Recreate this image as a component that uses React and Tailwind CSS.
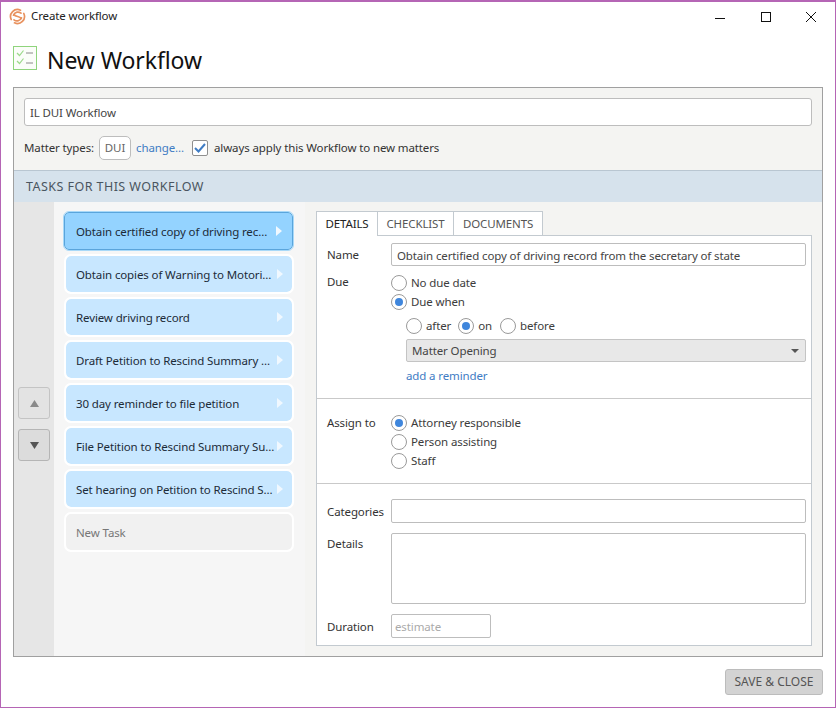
import React from 'react';

const tasks = [
  'Obtain certified copy of driving record from the secretary of state',
  'Obtain copies of Warning to Motorist and Sworn Report',
  'Review driving record',
  'Draft Petition to Rescind Summary Suspension of license',
  '30 day reminder to file petition',
  'File Petition to Rescind Summary Suspension with clerk',
  'Set hearing on Petition to Rescind Summary Suspension',
];

const Radio = ({ checked, label, className = '' }) => (
  <div className={`flex items-center gap-[4px] ${className}`}>
    <span className="w-[16px] h-[16px] rounded-full border border-[#9a9a9a] bg-white flex items-center justify-center shrink-0">
      {checked && <span className="w-[8px] h-[8px] rounded-full bg-[#3f86dc]" />}
    </span>
    <span className="text-[11.5px] leading-[16px] text-[#3c3c3c]">{label}</span>
  </div>
);

const TaskRow = ({ title, selected }) => (
  <div
    className={`flex items-center rounded-[5px] ${
      selected
        ? 'w-[229px] h-[38px] -ml-[2px] mb-[6px] pl-[11px] pr-[10px] bg-[#94d3ff] border border-[#5aa5dc] outline outline-[#a9d9f8]'
        : 'w-[226px] h-[36px] mb-[7px] pl-[10px] pr-[9px] bg-[#c8e7ff] outline-2 outline-white'
    }`}
  >
    <span className={`min-w-0 truncate translate-y-[1px] text-[11.5px] text-[#1c2b38] ${selected ? 'w-[193px]' : 'w-[200px]'}`}>{title}</span>
    <svg width="6" height="10" viewBox="0 0 6 10" className="shrink-0 ml-auto">
      <path d="M0 0 L6 5 L0 10 Z" fill="#f0f8ff" />
    </svg>
  </div>
);

const App = () => {
  return (
    <div className="w-[836px] h-[708px] bg-white border border-[#b565b5] border-t-2 flex flex-col overflow-hidden font-['Noto_Sans',sans-serif] tracking-[-0.12px] text-[#333]">
      {/* Title bar */}
      <div className="h-[28px] shrink-0 flex items-center pl-[8px]">
        <svg width="17" height="17" viewBox="0 0 17 17" fill="none" stroke="#e8925f" strokeWidth="1.7" strokeLinecap="round">
          <path d="M2.2 11.5A7 7 0 0 1 11.5 2.2" />
          <path d="M14.8 5.5A7 7 0 0 1 5.5 14.8" />
          <path d="M4.5 7.2C6 3.5 10 3.5 12 5.2" />
          <path d="M12.5 9.8C11 13.5 7 13.5 5 11.8" />
          <path d="M5 6.5C6.5 9 10.5 8 12.3 10.4" />
        </svg>
        <span className="ml-[5px] text-[11.5px] text-[#222]">Create workflow</span>
        <div className="ml-auto flex items-center">
          <svg width="46" height="28" viewBox="0 0 46 28" stroke="#111" fill="none"><path d="M18 16.5H28" /></svg>
          <svg width="46" height="28" viewBox="0 0 46 28" stroke="#111" fill="none"><rect x="18.5" y="10.5" width="9" height="9" /></svg>
          <svg width="46" height="28" viewBox="0 0 46 28" stroke="#111" fill="none"><path d="M17 10L27 20M27 10L17 20" /></svg>
        </div>
      </div>

      {/* Heading */}
      <div className="h-[57px] shrink-0 flex items-center pl-[12px] pb-[2px]">
        <svg width="24" height="24" viewBox="0 0 24 24" fill="none">
          <rect x="0.5" y="0.5" width="23" height="23" fill="#fbfdf9" stroke="#8fd47c" />
          <path d="M4 7L6.5 9.5L10.5 4.5M4 15L6.5 17.5L10.5 12.5" stroke="#9bd98a" strokeWidth="1.2" />
          <path d="M13 7H20M13 17H20" stroke="#8a8a8a" />
        </svg>
        <h1 className="ml-[10px] text-[23px] leading-[32px] text-[#111] tracking-[-0.1px] translate-y-[2px]">New Workflow</h1>
      </div>

      {/* Main panel */}
      <div className="mx-[12px] h-[570px] shrink-0 border border-[#a0a0a0] bg-[#f4f4f2] flex flex-col">
        <div className="h-[82px] shrink-0 px-[10px] pt-[10px]">
          <div className="h-[28px] bg-white border border-[#bdbdbd] rounded-[3px] flex items-center pl-[5px] text-[11.5px] text-[#444]"><span className="translate-y-[1px]">IL DUI Workflow</span></div>
          <div className="flex items-center mt-[10px] text-[11.5px] text-[#333]">
            <span className="w-[75px] shrink-0">Matter types:</span>
            <span className="w-[32px] h-[24px] bg-white border border-[#bdbdbd] rounded-[5px] flex items-center justify-center text-[#666]">DUI</span>
            <span className="ml-[5px] w-[56px] shrink-0 text-[#3f7cc4]">change...</span>
            <span className="w-[16px] h-[16px] bg-white border border-[#8f8f8f] rounded-[2px] flex items-center justify-center">
              <svg width="12" height="10" viewBox="0 0 12 10" fill="none"><path d="M1 5L4.5 8.5L11 1" stroke="#3f7cc4" strokeWidth="2" /></svg>
            </span>
            <span className="ml-[6px]">always apply this Workflow to new matters</span>
          </div>
        </div>

        <div className="h-[32px] shrink-0 bg-[#d6e2ec] border-t border-[#b9c6d1] flex items-center pl-[12px] pt-[1px] text-[12.5px] tracking-[0.45px] text-[#4a5560]">
          TASKS FOR THIS WORKFLOW
        </div>

        <div className="flex-1 min-h-0 flex">
          {/* Reorder strip */}
          <div className="w-[40px] shrink-0 bg-[#e6e6e6] flex flex-col items-center justify-center gap-[10px] pb-[10px]">
            <div className="w-[32px] h-[32px] bg-[#e3e3e3] border border-[#c4c4c4] rounded-[3px] flex items-center justify-center text-[#8a8a8a]">
              <svg width="9" height="7" viewBox="0 0 9 7"><path d="M4.5 0L9 7H0Z" fill="currentColor" /></svg>
            </div>
            <div className="w-[32px] h-[32px] bg-[#dcdcdc] border border-[#b5b5b5] rounded-[3px] flex items-center justify-center text-[#555]">
              <svg width="9" height="7" viewBox="0 0 9 7"><path d="M0 0H9L4.5 7Z" fill="currentColor" /></svg>
            </div>
          </div>

          {/* Task list */}
          <div className="w-[251px] shrink-0 bg-[#f6f6f6] pl-[12px] pt-[10px]">
            {tasks.map((t, i) => <TaskRow key={t} title={t} selected={i === 0} />)}
            <div className="w-[226px] h-[36px] bg-[#f1f1f1] outline-2 outline-white rounded-[5px] flex items-center pl-[10px] text-[11.5px] text-[#777]"><span className="translate-y-[1px]">New Task</span></div>
          </div>

          {/* Detail panel */}
          <div className="flex-1 min-w-0 pl-[11px] pr-[10px] pt-[9px] pb-[10px] flex flex-col">
            <div className="flex h-[25px] shrink-0 text-[11.5px] relative z-10">
              <div className="w-[62px] h-[25px] bg-white border border-b-0 border-[#c3cad0] flex items-center justify-center text-[#222]">DETAILS</div>
              <div className="w-[76px] h-[25px] bg-white border border-l-0 border-[#c3cad0] flex items-center justify-center text-[#555]">CHECKLIST</div>
              <div className="w-[89px] h-[25px] bg-white border border-l-0 border-[#c3cad0] flex items-center justify-center text-[#555]">DOCUMENTS</div>
            </div>
            <div className="flex-1 min-h-0 -mt-px bg-white border border-[#c3cad0] flex flex-col text-[11.5px] text-[#333]">
              <div className="h-[163px] shrink-0 border-b border-[#c9c9c9] pl-[10px] pr-[5px] pt-[7px]">
                <div className="flex items-center">
                  <span className="w-[64px] shrink-0">Name</span>
                  <div className="flex-1 h-[23px] border border-[#bdbdbd] rounded-[2px] flex items-center pl-[5px] text-[#444]"><span className="translate-y-[0.5px]">Obtain certified copy of driving record from the secretary of state</span></div>
                </div>
                <div className="flex mt-[8px]">
                  <span className="w-[64px] shrink-0 leading-[16px]">Due</span>
                  <div className="flex-1 min-w-0 pt-[1px]">
                    <Radio label="No due date" />
                    <Radio label="Due when" checked className="mt-[3px]" />
                    <div className="pl-[15px] mt-[8px]">
                      <div className="flex items-center">
                        <Radio label="after" />
                        <Radio label="on" checked className="ml-[7px]" />
                        <Radio label="before" className="ml-[8px]" />
                      </div>
                      <div className="h-[23px] mt-[5px] bg-[#e8e8e8] border border-[#c4c4c4] rounded-[2px] flex items-center justify-between pl-[5px] pr-[6px] text-[#444]">
                        Matter Opening
                        <svg width="8" height="4" viewBox="0 0 8 4"><path d="M0 0H8L4 4Z" fill="#555" /></svg>
                      </div>
                      <div className="mt-[5px] text-[#3f7cc4]">add a reminder</div>
                    </div>
                  </div>
                </div>
              </div>

              <div className="h-[85px] shrink-0 border-b border-[#c9c9c9] pl-[10px] pt-[16px] flex">
                <span className="w-[64px] shrink-0 leading-[16px]">Assign to</span>
                <div className="flex flex-col gap-[3px]">
                  <Radio label="Attorney responsible" checked />
                  <Radio label="Person assisting" />
                  <Radio label="Staff" />
                </div>
              </div>

              <div className="flex-1 min-h-0 pl-[10px] pr-[5px] pt-[15px]">
                <div className="flex items-center">
                  <span className="w-[64px] shrink-0 translate-y-[1px]">Categories</span>
                  <div className="flex-1 h-[24px] border border-[#bdbdbd] rounded-[2px]" />
                </div>
                <div className="flex mt-[10px]">
                  <span className="w-[64px] shrink-0 pt-[2px]">Details</span>
                  <div className="flex-1 h-[71px] border border-[#bdbdbd] rounded-[2px]" />
                </div>
                <div className="flex items-center mt-[10px]">
                  <span className="w-[64px] shrink-0 translate-y-[1px]">Duration</span>
                  <div className="w-[100px] h-[24px] border border-[#bdbdbd] rounded-[2px] flex items-center pl-[3px] text-[#aaa]"><span className="translate-y-[1px]">estimate</span></div>
                </div>
              </div>
            </div>
          </div>
        </div>
      </div>

      {/* Footer */}
      <div className="flex-1 flex justify-end items-start pr-[12px] pt-[12px]">
        <button className="w-[98px] h-[26px] bg-[#d3d3d3] border border-[#bcbcbc] rounded-[3px] text-[12px] tracking-normal text-[#555]">SAVE &amp; CLOSE</button>
      </div>
    </div>
  );
};

export default App;
